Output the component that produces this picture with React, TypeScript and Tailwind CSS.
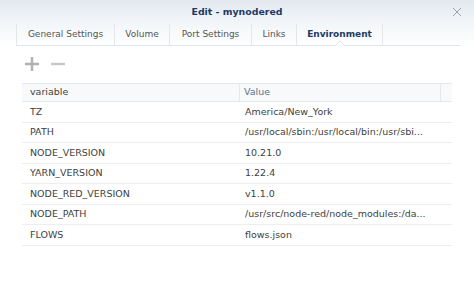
import React from "react";

const rows: [string, string][] = [
  ["TZ", "America/New_York"],
  ["PATH", "/usr/local/sbin:/usr/local/bin:/usr/sbi..."],
  ["NODE_VERSION", "10.21.0"],
  ["YARN_VERSION", "1.22.4"],
  ["NODE_RED_VERSION", "v1.1.0"],
  ["NODE_PATH", "/usr/src/node-red/node_modules:/da..."],
  ["FLOWS", "flows.json"],
];

const tabs: { t: string; w: string }[] = [
  { t: "General Settings", w: "w-[98px]" },
  { t: "Volume", w: "w-[55px]" },
  { t: "Port Settings", w: "w-[82px]" },
  { t: "Links", w: "w-[45px]" },
  { t: "Environment", w: "w-[87px]" },
];

export default function App() {
  return (
    <div
      className="w-[474px] h-[291px] bg-white relative overflow-hidden text-[#414141]"
      style={{ fontFamily: '"DejaVu Sans", Verdana, sans-serif' }}
    >
      <div className="bg-gradient-to-b from-[#e3e9f0] via-[#f3f6f9] to-white h-[47px]">
        <div className="h-[24px] flex items-center justify-center relative">
          <span className="text-[9.4px] font-bold text-[#1d3a64] mt-[1px]">Edit - mynodered</span>
          <svg className="absolute right-[12px] top-[7px]" width="10" height="10" viewBox="0 0 10 10">
            <path d="M1 1L9 9M9 1L1 9" stroke="#9aa3ad" strokeWidth="1" />
          </svg>
        </div>
        <div className="ml-[16px] mr-[14px] h-[22px] flex items-stretch border-b border-[#e2e5e8] relative">
          {tabs.map(({ t, w }, i) => (
            <div
              key={t}
              className={
                "flex items-center justify-center border-l border-[#e4e7ea] text-[9px] " +
                w +
                " " +
                (i === tabs.length - 1 ? "font-bold text-[#1d3a64] relative border-r" : "text-[#555]")
              }
            >
              {t}
              {i === tabs.length - 1 && (
                <svg className="absolute left-1/2 -translate-x-1/2 bottom-[-1px]" width="10" height="5" viewBox="0 0 10 5">
                  <path d="M0 5L5 0L10 5" fill="white" stroke="#e2e5e8" strokeWidth="1" />
                </svg>
              )}
            </div>
          ))}
        </div>
      </div>
      <div className="flex items-center gap-[10px] ml-[24px] mt-[9px] h-[16px]">
        <svg width="16" height="16" viewBox="0 0 16 16">
          <path d="M8 1V15M1 8H15" stroke="#b0b0b0" strokeWidth="2.4" />
        </svg>
        <svg width="16" height="16" viewBox="0 0 16 16">
          <path d="M1 8H15" stroke="#c8c8c8" strokeWidth="2.4" />
        </svg>
      </div>
      <div className="ml-[22px] w-[430px] mt-[11px] text-[9.5px]">
        <div className="flex h-[19px] bg-[#f8f9fa] border-t border-b border-[#e6e8eb]">
          <div className="w-[218px] pl-[8px] flex items-center border-r border-[#e6e8eb]">variable</div>
          <div className="w-[201px] pl-[4px] flex items-center text-[#5a7390] border-r border-[#e6e8eb]">Value</div>
          <div className="flex-1"></div>
        </div>
        {rows.map(([k, v]) => (
          <div key={k} className="flex h-[20.5px] border-b border-[#eceef0]">
            <div className="w-[218px] pl-[8px] flex items-center">{k}</div>
            <div className="flex-1 pl-[5px] flex items-center">{v}</div>
          </div>
        ))}
      </div>
    </div>
  );
}
